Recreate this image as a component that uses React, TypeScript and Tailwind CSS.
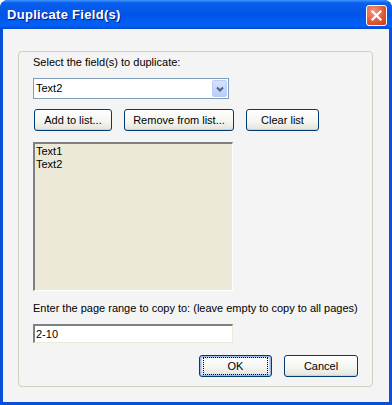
import React from "react";

const font = { fontFamily: '"Liberation Sans", Arial, sans-serif' };

function XpButton({ label, w, isDefault }: { label: string; w: string; isDefault?: boolean }) {
  return (
    <div
      className={`${w} h-[22px] rounded-[3px] border border-[#003C74] bg-[linear-gradient(to_bottom,#FFFFFF_0%,#F4F4F0_60%,#E3E2DA_100%)] flex items-center justify-center text-[11px] text-black p-[1px] ${
        isDefault ? "shadow-[inset_0_0_0_1px_#9DB9EB,inset_0_0_0_2px_#C5D5F5]" : "shadow-[inset_0_-1px_0_#D6D0C5]"
      }`}
    >
      <div
        className={`w-full h-full flex items-center justify-center ${
          isDefault ? "border border-dotted border-black m-[2px]" : ""
        }`}
      >
        {label}
      </div>
    </div>
  );
}

export default function App() {
  return (
    <div className="w-[392px] h-[405px] overflow-hidden" style={font}>
      <div className="w-full h-full flex flex-col rounded-t-[8px] bg-[#0A4FD8]">
        {/* title bar */}
        <div className="h-[29px] shrink-0 rounded-t-[8px] bg-[linear-gradient(to_bottom,#3D95FF_0%,#0A5FEE_10%,#0055E8_50%,#0062F7_88%,#0048D0_100%)] flex items-center justify-between pl-[7px] pr-[5px]">
          <span className="text-white font-bold text-[13px] tracking-[0.3px] [text-shadow:1px_1px_0_#0A1883]">
            Duplicate Field(s)
          </span>
          <div className="w-[21px] h-[21px] rounded-[3px] border border-white bg-[radial-gradient(circle_at_35%_30%,#F19A7E_0%,#E25A34_55%,#C63A14_100%)] flex items-center justify-center mt-[1px]">
            <svg width="13" height="13" viewBox="0 0 13 13">
              <path d="M2.5 2.5 L10.5 10.5 M10.5 2.5 L2.5 10.5" stroke="white" strokeWidth="2.2" strokeLinecap="square" />
            </svg>
          </div>
        </div>
        {/* client area */}
        <div className="flex-1 mx-[3px] mb-[3px] bg-[#F4F4F4] pt-[22px] pl-[15px]">
          <div className="w-[355px] h-[336px] border border-[#D0D0BF] rounded-[4px] pl-[14px] pr-[14px] pt-[4px] flex flex-col">
            <div className="text-[11px] leading-[13px] text-black">Select the field(s) to duplicate:</div>
            {/* combo */}
            <div className="mt-[9px] w-[196px] h-[21px] border border-[#7F9DB9] bg-white flex items-center justify-between">
              <span className="text-[11px] pl-[2px] text-black">Text2</span>
              <div className="w-[15px] h-[17px] mr-[1px] rounded-[2px] bg-[linear-gradient(to_bottom,#D6E2FC_0%,#B9CDF9_100%)] border border-[#B8CBF5] flex items-center justify-center">
                <svg width="8" height="6" viewBox="0 0 8 6">
                  <path d="M1 1.5 L4 4.5 L7 1.5" stroke="#4D6185" strokeWidth="2" fill="none" />
                </svg>
              </div>
            </div>
            {/* buttons */}
            <div className="mt-[10px] ml-[1px] flex gap-[12px]">
              <XpButton label="Add to list..." w="w-[78px]" />
              <XpButton label="Remove from list..." w="w-[110px]" />
              <XpButton label="Clear list" w="w-[73px]" />
            </div>
            {/* list */}
            <div className="mt-[11px] w-[200px] h-[149px] bg-[#ECE9D8] border-t-2 border-l-2 border-t-[#808080] border-l-[#808080] border-b border-r border-b-white border-r-white pl-[1px] pt-[1px] text-[11px] leading-[13px] text-black">
              <div>Text1</div>
              <div>Text2</div>
            </div>
            <div className="mt-[11px] text-[11px] leading-[13px] text-black">
              Enter the page range to copy to: (leave empty to copy to all pages)
            </div>
            <div className="mt-[9px] w-[200px] h-[19px] bg-white border-t-2 border-l-2 border-t-[#808080] border-l-[#808080] border-b border-r border-b-[#ECE9D8] border-r-[#ECE9D8] flex items-center pl-[1px] text-[11px] text-black">
              2-10
            </div>
            <div className="mt-[12px] flex justify-end gap-[12px]">
              <XpButton label="OK" w="w-[73px]" isDefault />
              <XpButton label="Cancel" w="w-[74px]" />
            </div>
          </div>
        </div>
      </div>
    </div>
  );
}
